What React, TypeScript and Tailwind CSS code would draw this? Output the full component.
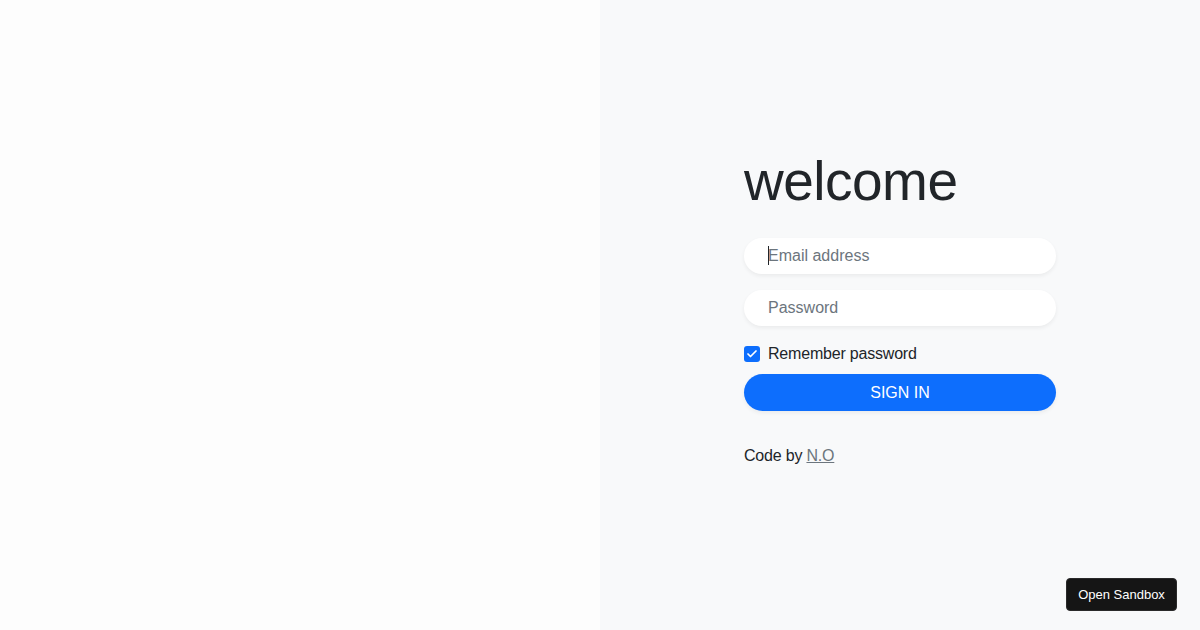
import { Check } from 'lucide-react';

const font = { fontFamily: '"Liberation Sans", Arial, sans-serif' };

export default function App() {
  return (
    <div className="relative flex h-[630px] w-[1200px] overflow-hidden" style={font}>
      {/* left panel */}
      <div className="h-full w-[600px] bg-[#fdfdfd]" />

      {/* right panel with form */}
      <div className="flex h-full w-[600px] bg-[#f8f9fa] pl-[144px] pt-[148px]">
        <div className="flex w-[312px] flex-col">
          <h1 className="text-[55px] leading-[66px] font-normal tracking-[-0.5px] text-[#212529]">welcome</h1>

          <div className="relative mt-[24px]">
            <input
              type="email"
              placeholder="Email address"
              className="h-[36px] w-full rounded-full bg-white pl-[24px] text-[16px] text-[#212529] shadow-[0_2px_4px_rgba(0,0,0,0.06)] outline-none placeholder:text-[#6c757d]"
            />
            {/* text caret */}
            <span className="absolute left-[24px] top-[8px] h-[19px] w-px bg-[#212529]" />
          </div>

          <input
            type="password"
            placeholder="Password"
            className="mt-[16px] h-[36px] w-full rounded-full bg-white pl-[24px] text-[16px] text-[#212529] shadow-[0_2px_4px_rgba(0,0,0,0.06)] outline-none placeholder:text-[#6c757d]"
          />

          <label className="mt-[16px] flex items-center gap-[8px] text-[16px] tracking-[-0.2px] text-[#212529]">
            <span className="flex h-[16px] w-[16px] items-center justify-center rounded-[3px] bg-[#0d6efd]">
              <Check className="h-[12px] w-[12px] text-white" strokeWidth={3.5} />
            </span>
            Remember password
          </label>

          <button className="mt-[8px] h-[37px] w-full rounded-full bg-[#0d6efd] text-[16px] text-white shadow-[0_2px_4px_rgba(0,0,0,0.06)]">
            SIGN IN
          </button>

          <p className="mt-[33px] text-[16px] tracking-[-0.2px] text-[#212529]">
            Code by <a className="text-[#6c757d] underline">N.O</a>
          </p>
        </div>
      </div>

      <button className="absolute left-[1066px] top-[578px] h-[33px] w-[111px] rounded-[4px] border border-[#2a2a2a] bg-[#151515] text-[13px] text-white">
        Open Sandbox
      </button>
    </div>
  );
}
